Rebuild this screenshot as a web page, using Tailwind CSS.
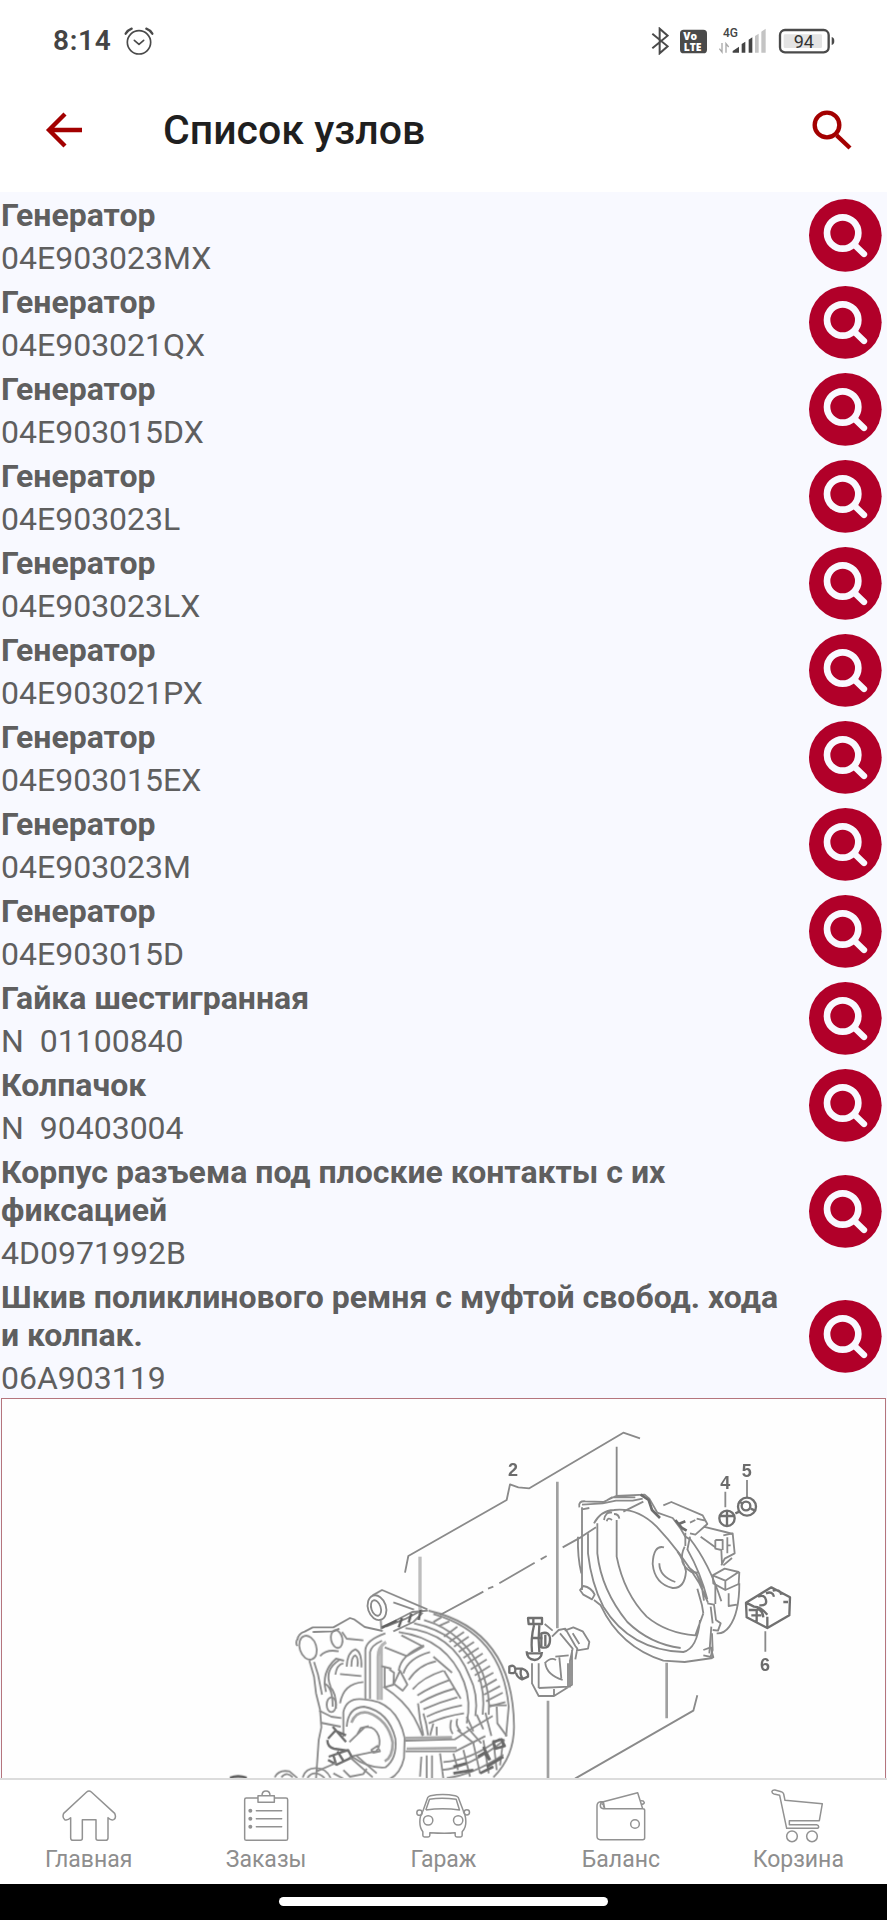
<!DOCTYPE html>
<html lang="ru">
<head>
<meta charset="utf-8">
<meta name="viewport" content="width=device-width, initial-scale=1">
<title>Список узлов</title>
<script src="https://cdn.jsdelivr.net/npm/@tailwindcss/browser@4"></script>
</head>
<body class="bg-[#f8f9ff] font-['Roboto',sans-serif] text-[#5f5f5f]">
<div class="flex min-h-screen flex-col">

  <div class="flex h-[67px] items-center justify-between bg-white pt-[14px] pl-[53px] pr-[52px] text-[#444]">
    <div class="flex items-center gap-[13px]">
      <span class="text-[28px] leading-8 font-semibold tracking-wide">8:14</span>
      <svg class="h-[30px] w-[30px]" viewBox="371 78 90 90" fill="none" stroke="#4a4a4a" stroke-width="5" stroke-linecap="round" stroke-linejoin="round">
        <circle cx="416" cy="127" r="35"/><path d="M402 121l14 12 14-12"/><path d="M376 101q7-11 18-15M456 101q-7-11-18-15" stroke-width="7"/>
      </svg>
    </div>
    <div class="flex items-center gap-[11px]">
      <svg class="h-7 w-[18px]" viewBox="93 78 54 84" fill="none" stroke="#4a4a4a" stroke-width="6"><path d="M97 98l46 38-24 21V83l24 21-46 38"/></svg>
      <svg class="h-7 w-7" viewBox="180 78 84 84" fill="#fff" font-family="Open Sans, sans-serif" font-weight="800">
        <rect x="180" y="86" width="81" height="71" rx="11" fill="#4a4a4a"/>
        <text font-size="31"><tspan x="190" y="118">Vo</tspan><tspan x="191" y="150">LTE</tspan></text>
      </svg>
      <svg class="h-7 w-12" viewBox="297 78 144 84">
        <text x="309" y="107" font-size="36" font-family="Roboto, sans-serif" font-weight="500" fill="#444">4G</text>
        <path d="M306 126v27l-8-10M318 155v-27l8 10" fill="none" stroke="#a8a8a8" stroke-width="4"/>
        <path d="M338 155v-5l19-13v18zM365 155v-26l11-7v33zM386 155v-39l11-7v46z" fill="#444"/>
        <path d="M405 155v-50l11-7v57zM424 155v-63l13-9v72z" fill="#c4c4c4"/>
      </svg>
      <svg class="h-7 w-[57px]" viewBox="474 78 171 84">
        <rect x="480" y="87" width="146" height="67" rx="15" fill="#fff" stroke="#4a4a4a" stroke-width="7"/>
        <rect x="491" y="100" width="115" height="41" rx="4" fill="#e4e4e4"/>
        <path d="M635 108q8 2 8 12t-8 12z" fill="#4a4a4a"/>
        <text x="521" y="141" font-size="54" font-family="Roboto, sans-serif" fill="#333">94</text>
      </svg>
    </div>
  </div>

  <header class="flex h-[125px] items-center bg-white pl-[45px] pr-[34px]">
    <button type="button" aria-label="Назад" class="mr-20 shrink-0">
      <svg class="h-9 w-[38px]" viewBox="134 332 114 108" fill="none" stroke="#a30000" stroke-width="13"><path d="M245 386H148M194 338l-48 48 48 48"/></svg>
    </button>
    <h1 class="flex-1 text-[41px] leading-[46px] font-medium text-[#1f1f1f]">Список узлов</h1>
    <button type="button" aria-label="Поиск" class="shrink-0">
      <svg class="h-[42px] w-[42px]" viewBox="573 320 126 126" fill="none" stroke="#a30000" stroke-width="13"><circle cx="621" cy="368" r="37"/><path d="M650 399l40 38"/></svg>
    </button>
  </header>

  <main class="flex flex-1 flex-col">
    <ul id="parts"></ul>
    <figure class="mx-px -mt-px flex-1 overflow-hidden border border-b-0 border-[#b5757d] bg-[#fefefe]">
      <svg class="block w-full" viewBox="2 1 883 379" role="img" aria-label="Схема генератора" fill="none" stroke="#8a8a8a" stroke-width="5.500" stroke-linejoin="round">
        <filter id="soft" filterUnits="userSpaceOnUse" x="0" y="0" width="887" height="400"><feGaussianBlur stdDeviation="0.6"/></filter>
        <g filter="url(#soft)">
        <!-- brackets and leader lines -->
        <g transform="translate(390 2) scale(.3333333)">
          <path d="M45 518L55 468 350 300 360 253 385 262 418 265 700 98 750 115M680 140V285"/>
        </g>
        <!-- alternator body -->
        <g transform="translate(220 142) scale(.3333333)">
          <path d="M600 50V215" stroke="#bdbdbd" stroke-width="10"/>
          <path d="M660 225L790 155M804 146l16-6M838 130L944 68M962 58l18-10"/>
          <ellipse cx="471" cy="203" rx="27" ry="38" transform="rotate(-18 471 203)"/>
          <ellipse cx="468" cy="204" rx="14" ry="24" transform="rotate(-18 468 204)"/>
          <path d="M458 166l28-16L622 208M482 238l2 28 46-26 46-24 48-4M520 187l62 22M498 260l60-24 50-26M520 274l60-28 28-28"/>
          <path d="M486 262l44-20M536 262l10-28M566 248l8-28M596 240l6-30" stroke="#606060" stroke-width="7"/>
          <path d="M232 300q3-20 22-25l24-13h62l50-28 14 5 30 22 54 12M232 318q-6-10 0-20M278 276l62-2 18-8"/>
          <ellipse cx="264" cy="323" rx="25" ry="37" transform="rotate(-18 264 323)"/>
          <ellipse cx="350" cy="297" rx="17" ry="27" transform="rotate(-12 350 297)"/>
          <path d="M366 276l14 20 50 5M300 348q20-22 56-14M268 362l14 48 6 50 12 48 4 54-8 38-8 116M282 366l12 38 12 60M380 380q2-44 26-52 20 8 18 54M394 380q0-30 12-34 10 6 6 34M360 402l64 6M318 456q-16-60 30-100l24 6"/>
          <path d="M332 440q-22-50 26-80M346 404q4-30 24-34M330 440q20 20 18 66M312 430q26 10 26 70"/>
          <ellipse cx="334" cy="494" rx="14" ry="22"/>
          <path d="M298 512l36 18 30 4M302 548l60 12M360 490q10-60 70-64"/>
          <path d="M436 476V330q2-30 60-50M450 476V336q4-20 36-34"/>
          <path d="M474 480V350q0-30 24-44M484 320v160" stroke="#b4b4b4" stroke-width="9"/>
          <path d="M370 590V516q10-44 60-38 100 4 124 116l-2 60q-10 46-44 64M380 560q4-58 52-60 74 14 94 96 6 60-30 86-50 4-100-32"/>
          <path d="M394 548q14-36 50-30 60 20 74 90 0 44-24 56" stroke="#a2a2a2" stroke-width="8"/>
          <path d="M388 606l46-44q30-6 42 26 8 30-8 46l-70 14M412 582l10-18 24-6M454 630l18-12 8 16-20 4z"/>
          <path d="M324 596l22-24 32 14M322 600q0 22 20 26l40 6M338 560l40 46M326 650l58-20 12 22-46 22-26-14M352 634l18 28M340 646l8 26" stroke="#6c6c6c" stroke-width="7"/>
          <path d="M388 650l70 62M408 646l62 54M290 694l60-26"/>
          <!-- rotor windows -->
          <path d="M494 322l66 26 50-28-66-34M484 378l30 8M490 440q62 40 92 92 14 26 26 56M494 382v60l26-8 2-36-14-10M522 430l18-38 22 42-14 18-26-20M536 392q6-46 76-76M550 400q14-46 80-64M566 420q30-46 82-56M578 448q30-36 92-56M592 466q40-26 96-46M600 488q46-26 102-42M610 508q50-22 102-36M620 530q50-24 106-34M626 550q50-22 106-30M640 350l56 48M672 392l50 84"/>
          <path d="M594 490q4 50 16 96M610 520q10 30 14 66M640 550l-10 36M650 560v26M694 540q-8 24 4 42M712 536q-8 20 10 38"/>
          <!-- stator rings -->
          <path d="M536 276q146 20 196 150 22 60 8 124M556 264q142 14 192 144 28 54 18 120M582 250q140 30 192 150 22 60 14 124M612 240q120 34 176 160 24 68 18 124M626 212Q880 270 882 560 882 650 820 712M640 222Q846 280 866 500L858 590"/>
          <path d="M672 290l40-30M688 306l44-30M702 320l44-30M716 336l46-30M730 354l46-30M742 370l46-30M752 388l48-30M764 406l46-28M774 424l46-26M784 444l46-26M792 464l48-26M798 484l50-26M806 500l50-14M640 246l24-14M656 258l32-14"/>
          <!-- lower bracket arm -->
          <path d="M556 602l148-4 54-34 60-36M556 634h150l90-46"/>
          <path d="M556 594l140-2M560 626l150-2" stroke="#a8a8a8" stroke-width="8"/>
          <path d="M806 496h54M830 500l2 50 28 38M740 530l20 44M770 524l20 44M796 518l18 70M712 570l50 40M740 560l44 50M620 646v70M636 646v70M604 650l-4 60M660 640l10 76M700 640l14 50M730 630l20 80M760 610l20 90M790 600l16 100M820 600l10 90M850 596l-10 80M664 690q80-4 190-90M670 666q80-4 170-70M680 714q80-10 170-70"/>
          <path d="M820 606l24-8 10 20-28 8zM774 650l20-12 14 22M800 680l50-30M700 700l60-10M780 700l40-20M700 680l40-10M790 620l20 40" stroke="#686868" stroke-width="8"/>
          <path d="M164 712q12-24 44-18l24 20M184 712q16-20 34 0M248 712q8-28 40-28 30 0 44 30M262 714q20-28 52 0M340 700l30 16M370 690l20 20 40-8 10-16"/>
          <path d="M30 714q24-10 50 0" stroke="#606060" stroke-width="8"/>
        </g>
        <!-- regulator, rear cover, nuts and plug -->
        <g transform="translate(490 22) scale(.3333333)">
          <path d="M218 382l54-30 46-30M400 275l60-30"/>
          <path d="M202 185V625M174 842V1080M530 728V895" stroke="#a0a0a0" stroke-width="8"/>
          <path d="M706 215V262M771 180V232M826 634V695M255 1076L610 872 622 826"/>
          <path d="M276 262V510M264 350q-2 60 10 110M294 340V400Q304 490 340 560 420 690 580 696 622 686 630 600M322 310V400Q334 510 412 606 480 672 572 684M380 300V410Q402 520 470 590 530 640 616 646L640 580"/>
          <path d="M268 262q-4-20 18-18l54 2 38-18 86-4 14 12 24 42 46 16 24 32 14 24 14 8M276 254l62-4 40-8h50l30-6M276 268l22-4M352 240l14-8h70"/>
          <path d="M452 224l24 16 10 30 24 24M556 300l20 24 14 8M566 312l20-8" stroke="#6c6c6c" stroke-width="8"/>
          <path d="M586 338v40M600 350l-8 40"/>
          <path d="M312 310q20-38 60-40 70-8 128 50 70 74 128 170l26 58M342 300q4-26 24-22M350 304q4-14 16-4M372 282q14 0 16 14M598 354q60 76 96 190M592 388q40 70 60 150M594 440l26 22 14 30 8 50"/>
          <path d="M520 256l24-10 94 40 14 26-36 32-16-4M620 296l26 6M640 320l66 16 22 6M632 350l44 32M600 308l16-8"/>
          <path d="M700 346l28-6 6 60-30 16-10 20M676 360v26l18 4 2 42M676 360l22 0v30M712 352v48M722 376h-8M700 436l26-22"/>
          <path d="M668 466l36-20 42 10-40 26zM668 466l2 24 36 20 40-18 2-36M706 482v26M676 496v56M748 490q0 90-30 130-16 22-38 20M716 520v38l24-4"/>
          <path d="M652 550l20 4 6 46 14 10-8 22-16-2M640 580l-4-24-14-50M662 560l6 50M666 640l2 50-8 26M640 690l22-8 8 30-30-6"/>
          <path d="M270 510l10 14 26 14 8-14q-10-22-34-26zM312 540l20 16Q390 680 520 722l64 4 84-12M664 620l-6 80"/>
          <path d="M522 382q-32-8-34 50 6 60 60 72 36 2 40-50-8-36-26-60M508 430q0 40 48 56M584 380q-24 50 20 76l20 2"/>
          <g stroke="#707070" stroke-width="7">
            <path d="M114 594h42v18h-40zM130 594v18M132 616q-10 40-6 80M148 616q-4 40 0 80M110 694q0 24 24 26 20-2 22-24M108 700h48M124 654h34M154 640q26-8 26 20t-26 22zM166 644v34"/>
            <path d="M58 740q16-8 18 8t-18 10zM78 746h18q20 6 18 24l-18 8q-16-6-18-20M94 746q-6 16 4 30"/>
          </g>
          <path d="M164 612l24 20M186 650l20-20 20-4 30 52 6 8-6 32M210 640l38 46-8 36M224 632l26-10 28 12 20 32-4 20-36 6M248 640l20 32M126 730v62M146 730v74M146 804l94-4V720M126 790l20 38h46l54-34V690M192 828v-26M164 730q18-20 34-10M166 730q4 34 52 50M208 712l6 64M234 730v68M196 710l40-4"/>
          <g stroke="#707070" stroke-width="7">
            <circle cx="711" cy="295" r="23"/><path d="M690 288h42M711 272v46"/>
            <circle cx="771" cy="260" r="27"/><circle cx="768" cy="258" r="13"/><path d="M746 244l14 8M782 266l14 6M736 280l14-6"/>
            <path d="M768 548l76-46 56 30-2 54-66 38-62-32zM768 548l24 12q20 0 40 24M832 590v30M776 570h24v36M784 586h30M804 530q20-8 24 10t-20 16M828 520q20-8 24 10M848 512q22-6 26 12M800 566q18 4 20 26M880 546h14"/>
          </g>
          <g fill="#6c6c6c" stroke="none" font-family="Liberation Sans, sans-serif" font-size="54" font-weight="700">
            <text x="54" y="169">2</text><text x="691" y="206">4</text><text x="755" y="170">5</text><text x="810" y="752">6</text>
          </g>
        </g>
        </g>
      </svg>
    </figure>
  </main>

  <nav class="grid h-[106px] grid-cols-5 border-t-2 border-[#dcdcdc] bg-white text-[23px] leading-[26px] text-[#8e8e8e]">
    <a href="#home" class="flex flex-col items-center gap-1 pt-[9px]">
      <svg class="h-[54px] w-14" viewBox="182 57 168 162" fill="none" stroke="#929292" stroke-width="4.500" stroke-linejoin="round"><path d="M259 66q7-6 14 0l70 64q6 14-3 19-8 3-17-6v61q0 7-7 7h-23q-6 0-6-6v-56h-41v56q0 6-6 6h-22q-7 0-7-7v-61q-9 9-18 6-8-6-3-19z"/></svg>
      <span>Главная</span>
    </a>
    <a href="#orders" class="flex flex-col items-center gap-1 pt-[9px]">
      <svg class="h-[54px] w-14" viewBox="714 57 168 162" fill="none" stroke="#929292" stroke-width="4.500" stroke-linecap="round" stroke-linejoin="round"><path d="M774 84h-35q-5 0-5 5v117q0 5 5 5h119q5 0 5-5V89q0-5-5-5h-35M774 77h49v20h-49zM786 77q0-14 12-14t12 14M769 122h76M769 146h76M769 170h76"/><g fill="#929292" stroke="none"><circle cx="751" cy="122" r="6"/><circle cx="751" cy="146" r="6"/><circle cx="751" cy="170" r="6"/></g></svg>
      <span>Заказы</span>
    </a>
    <a href="#garage" class="flex flex-col items-center gap-1 pt-[9px]">
      <svg class="h-[54px] w-14" viewBox="-73.500 57 168 162" fill="none" stroke="#929292" stroke-width="4.500" stroke-linejoin="round"><path d="M-50 124l15-42q3-4 8-5 37-7 74 0 6 1 9 5l16 42M-41 120l11-32q36-7 80 0l10 32q-50-7-101 0M-50 124q-9 12-9 32 0 18 9 29v11q0 5 5 5h11q5 0 5-5v-8q49 3 76 0v8q0 5 5 5h11q5 0 5-5v-11q12-12 11-32-1-20-8-29"/><circle cx="-60" cy="128" r="8"/><circle cx="82" cy="127" r="8"/><circle cx="-34" cy="151" r="14"/><circle cx="56" cy="151" r="14"/></svg>
      <span>Гараж</span>
    </a>
    <a href="#balance" class="flex flex-col items-center gap-1 pt-[9px]">
      <svg class="h-[54px] w-14" viewBox="459 57 168 162" fill="none" stroke="#929292" stroke-width="4.500" stroke-linejoin="round"><path d="M490 95h-8q-11 1-11 13v91q0 10 10 10h127q6 0 6-6v-82q0-5-6-5H490q-9-1-9-9 0-10 9-12l103-27 15 48M490 95l4 20M486 101q7 4 5 12M601 93q10-2 12 5-1 5-9 5"/><circle cx="585" cy="162" r="13"/></svg>
      <span>Баланс</span>
    </a>
    <a href="#cart" class="flex flex-col items-center gap-1 pt-[9px]">
      <svg class="h-[54px] w-14" viewBox="991 57 168 162" fill="none" stroke="#929292" stroke-width="4.500" stroke-linejoin="round"><path d="M1036 91l112 10-9 51h-90v12h82q6 1 6 6t-6 5h-90l-21-99-17-4q-7-2-6-8 2-5 9-4l19 5q5 1 7 7z"/><circle cx="1057" cy="199" r="16"/><circle cx="1117" cy="199" r="16"/></svg>
      <span>Корзина</span>
    </a>
  </nav>
  <div class="flex h-9 justify-center bg-black pt-[13px]"><div class="h-[9px] w-[37%] rounded-full bg-white"></div></div>
</div>

<script>
  const parts = [
    ['Генератор', '04E903023MX'],
    ['Генератор', '04E903021QX'],
    ['Генератор', '04E903015DX'],
    ['Генератор', '04E903023L'],
    ['Генератор', '04E903023LX'],
    ['Генератор', '04E903021PX'],
    ['Генератор', '04E903015EX'],
    ['Генератор', '04E903023M'],
    ['Генератор', '04E903015D'],
    ['Гайка шестигранная', 'N  01100840'],
    ['Колпачок', 'N  90403004'],
    ['Корпус разъема под плоские контакты с их фиксацией', '4D0971992B'],
    ['Шкив поликлинового ремня с муфтой свобод. хода и колпак.', '06A903119'],
  ];
  document.getElementById('parts').innerHTML = parts.map(([name, code]) => `
    <li class="flex items-center justify-between gap-5 pr-[5px] pl-px text-[32px] leading-[38px]">
      <div class="pt-1 pb-0.5">
        <h2 class="font-bold">${name}</h2>
        <p class="mt-[5px] whitespace-pre">${code}</p>
      </div>
      <button type="button" aria-label="Найти ${code}" class="shrink-0">
        <svg class="h-[73px] w-[73px]" viewBox="66 27 219 219" fill="none" stroke="#f8f9ff"><circle cx="175" cy="136" r="109" fill="#b10029" stroke="none"/><circle cx="167" cy="129" r="47" stroke-width="20"/><path d="M203 165l28 27" stroke-width="19" stroke-linecap="round"/></svg>
      </button>
    </li>`).join('');
</script>
</body>
</html>
